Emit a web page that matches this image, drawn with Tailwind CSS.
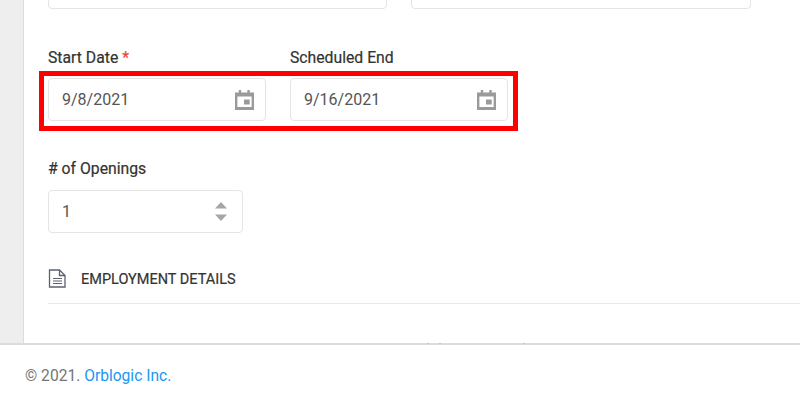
<!DOCTYPE html>
<html lang="en">
<head>
  <meta charset="UTF-8">
  <title>Job Form</title>
  <script src="https://cdn.jsdelivr.net/npm/@tailwindcss/browser@4"></script>
</head>
<body class="bg-white font-['Roboto',sans-serif] overflow-hidden">
  <div class="relative w-[800px] h-[400px] overflow-hidden">
    <div class="flex h-[343px] overflow-hidden">
      <!-- Left gutter -->
      <div class="w-[24px] shrink-0 bg-[#eeeeee] border-r border-[#dddddd]"></div>
      <div class="flex-1 pl-[24px]">
        <!-- Clipped row from above -->
        <div class="flex gap-[24px] mt-[-34px]">
          <div class="w-[339px] h-[43px] border border-[#e4e4e4] rounded-[4px]"></div>
          <div class="w-[340px] h-[43px] border border-[#e4e4e4] rounded-[4px]"></div>
        </div>
        <!-- Dates -->
        <div class="flex gap-[24px] mt-[39px]">
          <div class="w-[218px]">
            <div class="text-[15.75px] leading-[20px] font-normal [-webkit-text-stroke:0.2px] text-[#333333] mb-[10px]">Start Date <span class="text-[#f44336]">*</span></div>
            <div class="h-[43px] border border-[#e4e4e4] rounded-[4px] flex items-center justify-between pl-[13px] pr-[11px] text-[16px] text-[#555555]">
              <span>9/8/2021</span>
              <svg width="19" height="20" viewBox="0 0 20 20" preserveAspectRatio="none" fill="#9a9a9a"><path fill-rule="evenodd" d="M0 2.500h4V0h2.500v2.500h6.500V0h2.500v2.500H20V20H0zM2.500 6.500V17h15V6.500z"/><path d="M9.500 9.500h6v5h-6z"/></svg>
            </div>
          </div>
          <div class="w-[218px]">
            <div class="text-[15.75px] leading-[20px] font-normal [-webkit-text-stroke:0.2px] text-[#333333] mb-[10px]">Scheduled End</div>
            <div class="h-[43px] border border-[#e4e4e4] rounded-[4px] flex items-center justify-between pl-[13px] pr-[11px] text-[16px] text-[#555555]">
              <span>9/16/2021</span>
              <svg width="19" height="20" viewBox="0 0 20 20" preserveAspectRatio="none" fill="#9a9a9a"><path fill-rule="evenodd" d="M0 2.500h4V0h2.500v2.500h6.500V0h2.500v2.500H20V20H0zM2.500 6.500V17h15V6.500z"/><path d="M9.500 9.500h6v5h-6z"/></svg>
            </div>
          </div>
        </div>
        <!-- Openings -->
        <div class="mt-[38px] w-[195px]">
          <div class="text-[15.75px] leading-[20px] font-normal [-webkit-text-stroke:0.2px] text-[#333333] mb-[11px]">&#35; of Openings</div>
          <div class="h-[43px] border border-[#e4e4e4] rounded-[4px] flex items-center justify-between pl-[13px] pr-[15px] text-[16px] text-[#555555]">
            <span>1</span>
            <svg width="12" height="19" viewBox="0 0 12 19" fill="#a6a6a6"><path d="M6 0l6 6.500H0z"/><path d="M0 12.500h12L6 19z"/></svg>
          </div>
        </div>
        <!-- Section heading -->
        <div class="mt-[35px] border-b border-[#eaeaea] h-[36px] flex items-start">
          <svg class="mt-[1px]" width="18" height="19" viewBox="0 0 18 19" fill="none" stroke="#5a6272" stroke-width="1.3"><path d="M1.500 1h10l5.500 5.500V18H1.500z"/><path d="M11.500 1v5.500H17"/><path d="M5 9.500h9M5 12h9M5 14.500h9" stroke-width="1.2"/></svg>
          <div class="ml-[15px] mt-[3px] text-[14.5px] leading-[18px] font-normal [-webkit-text-stroke:0.2px] text-[#333333]">EMPLOYMENT DETAILS</div>
        </div>
      </div>
    </div>
    <!-- Footer -->
    <div class="h-[57px] border-t-2 border-[#dcdcdc] pl-[25px] pt-[21px] text-[15.6px] leading-[20px] text-[#757575]">
      © 2021. <a class="text-[#2196f3]" href="#">Orblogic Inc.</a>
    </div>
    <!-- Annotation box -->
    <div class="absolute left-[39px] top-[71px] w-[479px] h-[60px] border-[5px] border-[#ff0000]"></div>
    <!-- Faint clipped marks on the footer edge -->
    <div class="absolute left-[427px] top-[343px] w-[2px] h-[1px] bg-[#c4c4c4]"></div>
    <div class="absolute left-[439px] top-[343px] w-[2px] h-[1px] bg-[#c4c4c4]"></div>
    <div class="absolute left-[523px] top-[343px] w-[2px] h-[1px] bg-[#c4c4c4]"></div>
  </div>
</body>
</html>
